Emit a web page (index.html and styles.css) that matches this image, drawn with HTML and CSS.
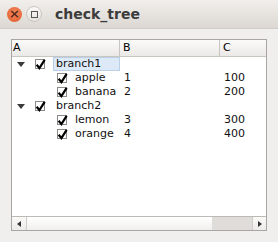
FILE: index.html
```html
<!DOCTYPE html>
<html lang="en">
<head>
    <meta charset="UTF-8">
    <title>check_tree</title>
    <link rel="stylesheet" href="styles.css">
</head>
<body>
    <div class="titlebar">
        <span class="btn-close">&times;</span>
        <span class="btn-max"><span class="max-box"></span></span>
        <span class="title">check_tree</span>
    </div>
    <div class="window">
        <div class="tree">
            <div class="header">
                <div class="col col-a">A</div>
                <div class="col col-b">B</div>
                <div class="col col-c">C</div>
            </div>
            <div class="rows">
                <div class="row">
                    <div class="cell cell-a parent">
                        <span class="expander"></span>
                        <span class="check"><svg viewBox="0 0 10 10"><path d="M1.5 5.2 L4 8.3 L8.8 0.8"/></svg></span>
                        <span class="label focus">branch1</span>
                    </div>
                    <div class="cell"></div>
                    <div class="cell"></div>
                </div>
                <div class="row">
                    <div class="cell cell-a child">
                        <span class="check"><svg viewBox="0 0 10 10"><path d="M1.5 5.2 L4 8.3 L8.8 0.8"/></svg></span>
                        <span class="label">apple</span>
                    </div>
                    <div class="cell">1</div>
                    <div class="cell">100</div>
                </div>
                <div class="row">
                    <div class="cell cell-a child">
                        <span class="check"><svg viewBox="0 0 10 10"><path d="M1.5 5.2 L4 8.3 L8.8 0.8"/></svg></span>
                        <span class="label">banana</span>
                    </div>
                    <div class="cell">2</div>
                    <div class="cell">200</div>
                </div>
                <div class="row">
                    <div class="cell cell-a parent">
                        <span class="expander"></span>
                        <span class="check"><svg viewBox="0 0 10 10"><path d="M1.5 5.2 L4 8.3 L8.8 0.8"/></svg></span>
                        <span class="label">branch2</span>
                    </div>
                    <div class="cell"></div>
                    <div class="cell"></div>
                </div>
                <div class="row">
                    <div class="cell cell-a child">
                        <span class="check"><svg viewBox="0 0 10 10"><path d="M1.5 5.2 L4 8.3 L8.8 0.8"/></svg></span>
                        <span class="label">lemon</span>
                    </div>
                    <div class="cell">3</div>
                    <div class="cell">300</div>
                </div>
                <div class="row">
                    <div class="cell cell-a child">
                        <span class="check"><svg viewBox="0 0 10 10"><path d="M1.5 5.2 L4 8.3 L8.8 0.8"/></svg></span>
                        <span class="label">orange</span>
                    </div>
                    <div class="cell">4</div>
                    <div class="cell">400</div>
                </div>
            </div>
            <div class="scrollbar">
                <div class="sb-btn sb-left"><span class="arrow-left"></span></div>
                <div class="sb-trough"></div>
                <div class="sb-thumb"></div>
                <div class="sb-btn sb-right"><span class="arrow-right"></span></div>
            </div>
        </div>
    </div>
</body>
</html>
```

FILE: styles.css
```css
body {
    margin: 0;
    width: 278px;
    height: 242px;
    overflow: hidden;
    background-color: #f0efed;
    font-family: 'DejaVu Sans', sans-serif;
    font-size: 11px;
    color: #111;
}
.titlebar {
    height: 28px;
    display: flex;
    align-items: center;
    padding-left: 7px;
    background: linear-gradient(#f1efec, #dcd7d2);
    border-bottom: 1px solid #d2cdc8;
}
.btn-close {
    width: 15px;
    height: 15px;
    border-radius: 50%;
    background: radial-gradient(circle at 50% 40%, #f58a5c, #e0582e);
    color: #5a2a18;
    font-size: 13px;
    line-height: 14px;
    text-align: center;
    font-weight: bold;
}
.btn-max {
    width: 14px;
    height: 14px;
    margin-left: 4px;
    border-radius: 50%;
    border: 1px solid #cbc6c1;
    background: linear-gradient(#faf9f8, #e6e2de);
    display: flex;
    align-items: center;
    justify-content: center;
}
.max-box {
    width: 5px;
    height: 5px;
    border: 1px solid #555;
}
.title {
    margin-left: 13px;
    font-size: 14px;
    font-weight: bold;
    color: #3c3c3c;
}
.window {
    padding: 10px 0 0 11px;
}
.tree {
    width: 256px;
    height: 192px;
    box-sizing: border-box;
    border: 1px solid #a9a6a2;
    background-color: #fff;
    display: flex;
    flex-direction: column;
}
.header {
    height: 17px;
    box-sizing: border-box;
    display: flex;
    background: linear-gradient(#fbfbfa, #ebe9e6);
    border-bottom: 1px solid #c9c6c2;
}
.col {
    box-sizing: border-box;
    padding-left: 3px;
    line-height: 16px;
    color: #000;
}
.col-a {
    width: 108px;
    padding-left: 1px;
    border-right: 1px solid #c9c6c2;
}
.col-b {
    width: 100px;
    border-right: 1px solid #c9c6c2;
}
.col-c {
    flex: 1;
}
.rows {
    flex: 1;
}
.row {
    display: grid;
    grid-template-columns: 108px 100px 1fr;
    height: 14px;
    line-height: 14px;
}
.cell {
    padding-left: 4px;
}
.cell-a {
    padding-left: 0;
    display: flex;
    align-items: center;
}
.expander {
    margin-left: 5px;
    width: 0;
    height: 0;
    border-left: 4px solid transparent;
    border-right: 4px solid transparent;
    border-top: 5px solid #3a3a3a;
}
.check {
    width: 10px;
    height: 10px;
    box-sizing: border-box;
    border: 1px solid #8c8a87;
    background-color: #fff;
    position: relative;
}
.check svg {
    position: absolute;
    left: -1px;
    top: -1px;
    width: 11px;
    height: 11px;
}
.check path {
    fill: none;
    stroke: #000;
    stroke-width: 2;
}
.parent .check {
    margin-left: 10px;
}
.child .check {
    margin-left: 45px;
}
.label {
    border: 1px solid transparent;
    padding: 0 2px;
    line-height: 12px;
}
.parent .label {
    margin-left: 8px;
}
.child .label {
    margin-left: 5px;
}
.label.focus {
    flex: 1;
    background-color: #dde9f6;
    border-color: #b8cfe8;
}
.scrollbar {
    height: 14px;
    box-sizing: border-box;
    border-top: 1px solid #bdbab6;
    display: flex;
}
.sb-btn {
    width: 14px;
    display: flex;
    align-items: center;
    justify-content: center;
    background: linear-gradient(#fafaf9, #ecebe9);
}
.sb-left {
    width: 15px;
    box-sizing: border-box;
    border-right: 1px solid #d0cdc9;
}
.sb-right {
    box-sizing: border-box;
    border-left: 1px solid #d0cdc9;
}
.sb-trough {
    flex: 1;
    background: linear-gradient(#ffffff, #f0efed);
}
.sb-thumb {
    width: 40px;
    background-color: #dfddd9;
}
.arrow-left {
    width: 0;
    height: 0;
    border-top: 3px solid transparent;
    border-bottom: 3px solid transparent;
    border-right: 4px solid #333;
}
.arrow-right {
    width: 0;
    height: 0;
    border-top: 3px solid transparent;
    border-bottom: 3px solid transparent;
    border-left: 4px solid #333;
}
```
